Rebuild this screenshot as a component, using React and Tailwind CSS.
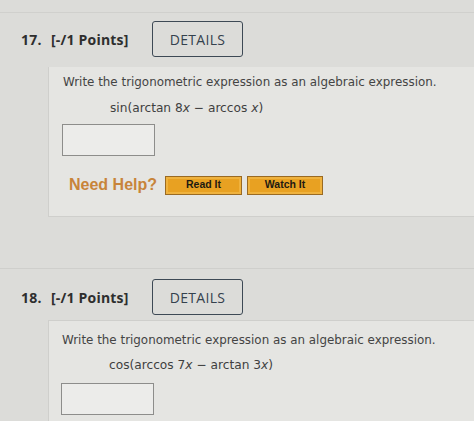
import React from "react";

const bodyFont = { fontFamily: '"DejaVu Sans", Verdana, sans-serif' };
const headFont = { fontFamily: '"Open Sans", "Liberation Sans", sans-serif' };
const arialFont = { fontFamily: '"Liberation Sans", Arial, sans-serif' };

const Header = ({ num }) => (
  <div className="flex items-center h-[36px] pl-[21px]" style={headFont}>
    <span className="w-[131px] flex text-[14px] font-bold text-[#2e2e2e] tracking-[0.2px]">
      <span className="w-[30px]">{num}.</span>
      <span>[-/1 Points]</span>
    </span>
    <div className="w-[91px] h-[36px] border-[1.5px] border-[#3d4955] rounded-[3px] flex items-center justify-center text-[14px] text-[#34414d] tracking-[0.3px]">
      DETAILS
    </div>
  </div>
);

const Expr = ({ children }) => (
  <div className="pl-[47px] text-[12.2px] text-[#3f3f3f] leading-[16px]" style={bodyFont}>
    {children}
  </div>
);

const AnswerBox = () => (
  <div className="ml-[-1px] w-[93px] h-[32px] border border-[#8d8d8b] bg-[#ececea]" />
);

const HelpButton = ({ label, w }) => (
  <div
    className="h-[19px] flex items-center justify-center bg-[#e8a122] border border-[#9a6a22] shadow-[inset_0_0_0_2px_#efb23e] text-[10.5px] font-bold text-[#1e1a12]"
    style={{ ...arialFont, width: w }}
  >
    {label}
  </div>
);

export default function App() {
  return (
    <div className="w-[474px] h-[421px] overflow-hidden bg-[#dcdcd9]">
      <div className="h-[13px] border-b border-[#d0d0cd]" />

      {/* question 17 */}
      <div className="pt-[8px]">
        <Header num="17" />
      </div>
      <div className="mt-[10px] ml-[48px] h-[150px] border-l border-b border-[#cfcfcc] bg-[#e5e5e2] pl-[14px] pt-[7px]">
        <div className="text-[11.9px] text-[#444444] leading-[16px]" style={bodyFont}>
          Write the trigonometric expression as an algebraic expression.
        </div>
        <div className="mt-[10px]">
          <Expr>
            sin(arctan 8<i>x</i> − arccos <i>x</i>)
          </Expr>
        </div>
        <div className="mt-[8px]">
          <AnswerBox />
        </div>
        <div className="mt-[19px] flex items-center pl-[6px]">
          <span className="text-[16px] font-bold text-[#c8843a] mr-[8px] leading-[20px]" style={arialFont}>
            Need Help?
          </span>
          <HelpButton label="Read It" w={77} />
          <div className="w-[5px]" />
          <HelpButton label="Watch It" w={76} />
        </div>
      </div>

      <div className="h-[52px] border-b border-[#cfcfcc]" />

      {/* question 18 */}
      <div className="pt-[10px]">
        <Header num="18" />
      </div>
      <div className="mt-[5px] ml-[48px] h-[120px] border-l border-t border-[#cfcfcc] bg-[#e5e5e2] pl-[13px] pt-[11px]">
        <div className="text-[11.9px] text-[#444444] leading-[16px]" style={bodyFont}>
          Write the trigonometric expression as an algebraic expression.
        </div>
        <div className="mt-[9px]">
          <Expr>
            cos(arccos 7<i>x</i> − arctan 3<i>x</i>)
          </Expr>
        </div>
        <div className="mt-[10px]">
          <AnswerBox />
        </div>
      </div>
    </div>
  );
}
